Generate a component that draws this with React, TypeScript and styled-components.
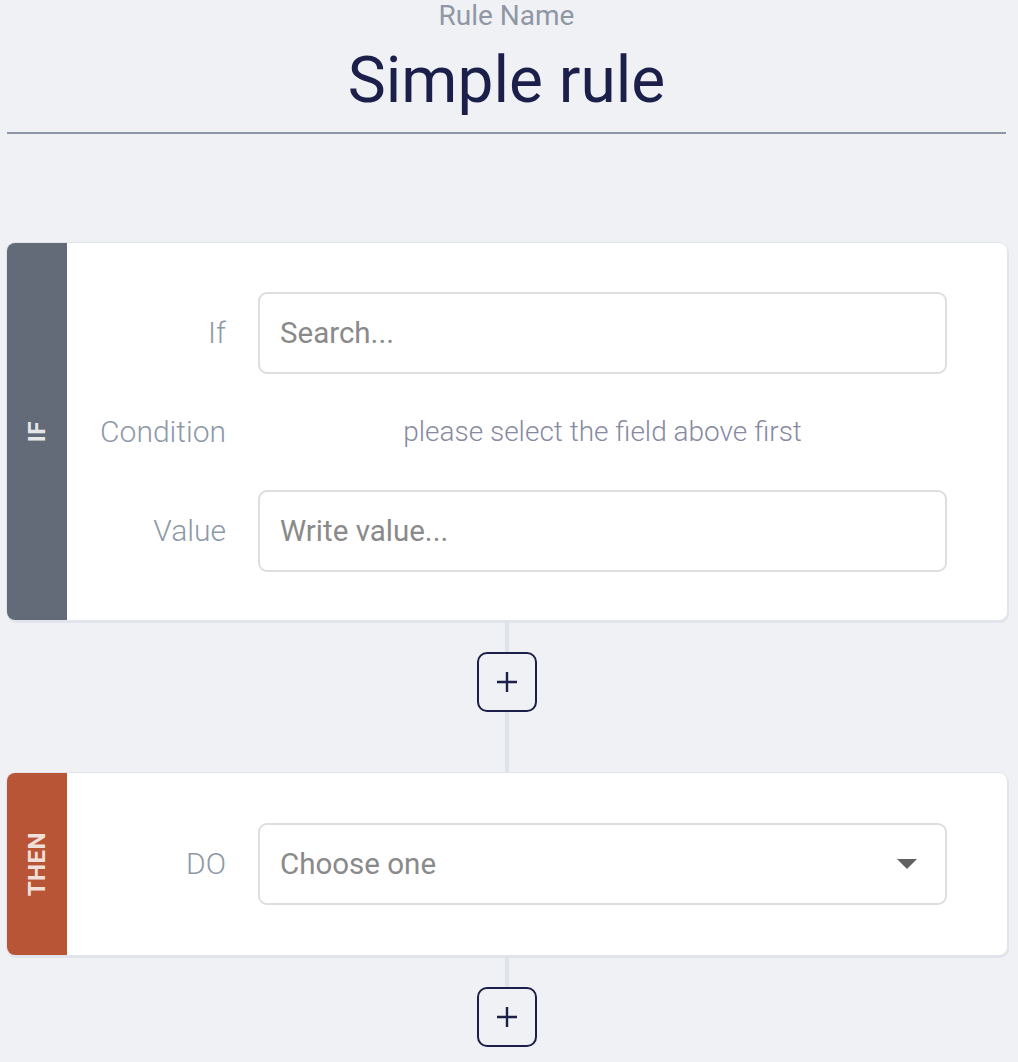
import React from "react";
import styled, { createGlobalStyle } from "styled-components";

const GlobalStyle = createGlobalStyle`
  html, body {
    margin: 0;
    padding: 0;
    background: #eff1f5;
    font-family: Roboto, "Noto Sans", Arial, sans-serif;
  }
  * {
    box-sizing: border-box;
  }
`;

const Page = styled.div`
  min-height: 1062px;
  padding: 0 10px 0 6px;
  display: flex;
  flex-direction: column;
`;

const Header = styled.header`
  display: flex;
  flex-direction: column;
  align-items: center;
  margin: 0 2px 108px 1px;
  border-bottom: 2px solid #8f96a4;
`;

const HeaderLabel = styled.div`
  font-size: 28px;
  line-height: 32px;
  color: #8f97a4;
  font-weight: 400;
`;

const HeaderTitle = styled.h1`
  margin: 9px 0 11px;
  font-size: 64px;
  line-height: 80px;
  font-weight: 400;
  color: #1c1f4a;
`;

const Card = styled.section`
  display: flex;
  background: #fff;
  border: 1px solid #e1e5eb;
  border-radius: 9px;
  box-shadow: 1px 2px 0 #e1e5eb;
  overflow: hidden;
`;

const Side = styled.div<{ $color: string; $text: string }>`
  flex: 0 0 60px;
  background: ${({ $color }) => $color};
  display: flex;
  align-items: center;
  justify-content: center;

  span {
    writing-mode: vertical-rl;
    transform: rotate(180deg);
    font-size: 24px;
    font-weight: 700;
    letter-spacing: 0.5px;
    color: ${({ $text }) => $text};
  }
`;

const Body = styled.div<{ $padTop: number; $padBottom: number }>`
  flex: 1;
  display: grid;
  grid-template-columns: 159px 1fr;
  column-gap: 32px;
  row-gap: 40px;
  align-items: center;
  padding: ${({ $padTop, $padBottom }) => `${$padTop}px 60px ${$padBottom}px 0`};
`;

const Label = styled.div`
  text-align: right;
  font-size: 30px;
  line-height: 36px;
  font-weight: 300;
  color: #8e99a8;
`;

const Field = styled.input`
  width: 100%;
  height: 82px;
  border: 2px solid #dedede;
  border-radius: 9px;
  padding: 0 20px;
  font-family: inherit;
  font-size: 29.5px;
  color: #555;
  background: #fff;
  outline: none;

  &::placeholder {
    color: #8a8a8a;
  }
`;

const Hint = styled.div`
  text-align: center;
  font-size: 28px;
  line-height: 36px;
  font-weight: 300;
  color: #878aa1;
`;

const Select = styled.div`
  height: 82px;
  border: 2px solid #dedede;
  border-radius: 9px;
  padding: 0 28px 0 20px;
  display: flex;
  align-items: center;
  justify-content: space-between;
  font-size: 29.5px;
  color: #8a8a8a;
  cursor: pointer;
`;

const Caret = styled.div`
  width: 0;
  height: 0;
  border-left: 10px solid transparent;
  border-right: 10px solid transparent;
  border-top: 10px solid #616161;
`;

const Connector = styled.div<{ $tail: number }>`
  position: relative;
  display: flex;
  justify-content: center;
  padding: 31px 0 ${({ $tail }) => $tail}px;

  &::before {
    content: "";
    position: absolute;
    top: 0;
    bottom: 0;
    left: calc(50% - 2px);
    width: 4px;
    background: #dfe4eb;
  }
`;

const AddButton = styled.button`
  position: relative;
  width: 60px;
  height: 60px;
  border: 2px solid #1c1f4a;
  border-radius: 10px;
  background: #eff1f5;
  display: flex;
  align-items: center;
  justify-content: center;
  padding: 0;
  cursor: pointer;
`;

const PlusIcon = () => (
  <svg width="22" height="22" viewBox="0 0 22 22">
    <path d="M11 1v20M1 11h20" stroke="#1c1f4a" strokeWidth="2.4" fill="none" />
  </svg>
);

export default function App() {
  return (
    <>
      <GlobalStyle />
      <Page>
        <Header>
          <HeaderLabel>Rule Name</HeaderLabel>
          <HeaderTitle>Simple rule</HeaderTitle>
        </Header>

        <Card>
          <Side $color="#636b78" $text="rgba(255,255,255,0.85)">
            <span>IF</span>
          </Side>
          <Body $padTop={49} $padBottom={48}>
            <Label>If</Label>
            <Field placeholder="Search..." />
            <Label>Condition</Label>
            <Hint>please select the field above first</Hint>
            <Label>Value</Label>
            <Field placeholder="Write value..." />
          </Body>
        </Card>

        <Connector $tail={60}>
          <AddButton aria-label="add condition">
            <PlusIcon />
          </AddButton>
        </Connector>

        <Card>
          <Side $color="#b95537" $text="rgba(255,255,255,0.82)">
            <span>THEN</span>
          </Side>
          <Body $padTop={50} $padBottom={50}>
            <Label>DO</Label>
            <Select>
              <span>Choose one</span>
              <Caret />
            </Select>
          </Body>
        </Card>

        <Connector $tail={0}>
          <AddButton aria-label="add action">
            <PlusIcon />
          </AddButton>
        </Connector>
      </Page>
    </>
  );
}
